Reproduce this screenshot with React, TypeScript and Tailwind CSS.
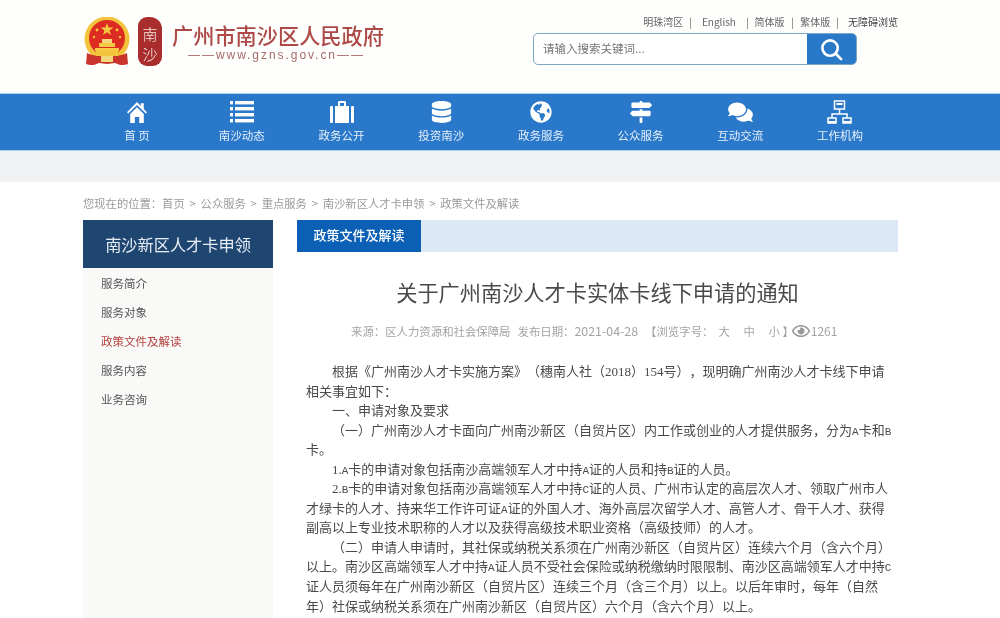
import { FaDatabase, FaGlobeAmericas, FaMapSigns, FaComments, FaRegEye } from "react-icons/fa";

const cjk = '"Noto Sans CJK SC", "Liberation Sans", sans-serif';
const bodyFont = '"Liberation Serif", "Noto Sans CJK SC", serif';

function Home() {
  return (
    <svg viewBox="0 0 20 21" className="w-[20px] h-[21px]" fill="white">
      <path d="M10 0L0 10.2l1.2 1.3L10 3l8.8 8.5 1.2-1.3-3.2-3.2V1.2h-3v2.8z" />
      <path d="M3.2 12L10 5.2 16.8 12v9h-4.6v-6H7.8v6H3.2z" />
    </svg>
  );
}

function Rows() {
  return (
    <svg viewBox="0 0 24 22" className="w-[24px] h-[22px]" fill="white">
      {[0, 6, 12, 18].map((y) => (
        <g key={y}>
          <rect x="0" y={y} width="3" height="3.4" />
          <rect x="5" y={y} width="19" height="3.4" />
        </g>
      ))}
    </svg>
  );
}

function Case() {
  return (
    <svg viewBox="0 0 24 22" className="w-[24px] h-[22px]" fill="white">
      <path d="M8 5V1.5C8 .7 8.7 0 9.5 0h5c.8 0 1.5.7 1.5 1.5V5h-2V2h-4v3z" />
      <rect x="0" y="5" width="3" height="17" rx="1" />
      <rect x="5" y="5" width="14" height="17" />
      <rect x="21" y="5" width="3" height="17" rx="1" />
    </svg>
  );
}

function Sitemap() {
  return (
    <svg viewBox="0 0 25 24" className="w-[25px] h-[24px]" fill="none" stroke="white" strokeWidth="1.5">
      <rect x="7.5" y="1" width="10" height="8" />
      <rect x="9.5" y="3" width="6" height="2" fill="white" stroke="none" />
      <path d="M12.5 9v5M5 18v-4h15v4" />
      <rect x="1" y="18" width="8" height="5" />
      <rect x="16" y="18" width="8" height="5" />
      <rect x="1" y="21" width="8" height="2" fill="white" stroke="none" />
      <rect x="16" y="21" width="8" height="2" fill="white" stroke="none" />
    </svg>
  );
}

const navItems = [
  { label: "首 页", icon: <Home /> },
  { label: "南沙动态", icon: <Rows /> },
  { label: "政务公开", icon: <Case /> },
  { label: "投资南沙", icon: <FaDatabase className="w-[21px] h-[22px]" /> },
  { label: "政务服务", icon: <FaGlobeAmericas className="w-[22px] h-[22px]" /> },
  { label: "公众服务", icon: <FaMapSigns className="w-[22px] h-[22px]" /> },
  { label: "互动交流", icon: <FaComments className="w-[25px] h-[22px]" /> },
  { label: "工作机构", icon: <Sitemap /> },
];

const sideItems = ["服务简介", "服务对象", "政策文件及解读", "服务内容", "业务咨询"];
const crumbs = ["首页", "公众服务", "重点服务", "南沙新区人才卡申领", "政策文件及解读"];

// 原文按行排好，i 表示首行缩进
const lines = [
  { t: "根据《广州南沙人才卡实施方案》（穗南人社（2018）154号），现明确广州南沙人才卡线下申请", i: true },
  { t: "相关事宜如下：" },
  { t: "一、申请对象及要求", i: true },
  { t: "（一）广州南沙人才卡面向广州南沙新区（自贸片区）内工作或创业的人才提供服务，分为A卡和B", i: true },
  { t: "卡。" },
  { t: "1.A卡的申请对象包括南沙高端领军人才中持A证的人员和持B证的人员。", i: true },
  { t: "2.B卡的申请对象包括南沙高端领军人才中持C证的人员、广州市认定的高层次人才、领取广州市人", i: true },
  { t: "才绿卡的人才、持来华工作许可证A证的外国人才、海外高层次留学人才、高管人才、骨干人才、获得" },
  { t: "副高以上专业技术职称的人才以及获得高级技术职业资格（高级技师）的人才。" },
  { t: "（二）申请人申请时，其社保或纳税关系须在广州南沙新区（自贸片区）连续六个月（含六个月）", i: true },
  { t: "以上。南沙区高端领军人才中持A证人员不受社会保险或纳税缴纳时限限制、南沙区高端领军人才中持C" },
  { t: "证人员须每年在广州南沙新区（自贸片区）连续三个月（含三个月）以上。以后年审时，每年（自然" },
  { t: "年）社保或纳税关系须在广州南沙新区（自贸片区）六个月（含六个月）以上。" },
];

// 原图的 A/B/C 是半角宋体，用等宽字体凑半个字宽
function BodyLine({ text }: { text: string }) {
  return (
    <>
      {text.split(/([ABC])/).map((part, i) =>
        /^[ABC]$/.test(part) ? (
          <span key={i} className="font-['Liberation_Mono'] text-[11px] leading-none">{part}</span>
        ) : (
          part
        ),
      )}
    </>
  );
}

function Emblem() {
  return (
    <svg viewBox="0 0 48 50" className="w-[48px] h-[50px]">
      <circle cx="24" cy="22" r="22.5" fill="#f3c33c" />
      <circle cx="24" cy="21" r="18" fill="#dd2c22" />
      <path d="M24 6l1.6 4.6h4.8l-3.9 2.9 1.5 4.6-4-2.9-4 2.9 1.5-4.6-3.9-2.9h4.8z" fill="#f6c945" />
      <circle cx="14" cy="13" r="1.4" fill="#f6c945" />
      <circle cx="34" cy="13" r="1.4" fill="#f6c945" />
      <circle cx="11" cy="20" r="1.2" fill="#f6c945" />
      <circle cx="37" cy="20" r="1.2" fill="#f6c945" />
      <path d="M12 31h24v3H12zM16 26h16v4H16z" fill="#f6c945" />
      <path d="M19 22h10v4H19z" fill="#f3d77a" />
      <path d="M4 36c6 3 12 3 20 3s14 0 20-3l1 11c-5 2-9 1-13-1l-8 1-8-1c-4 2-8 3-13 1z" fill="#c9352c" />
      <path d="M13 34h22v5H13z" fill="#f3c33c" />
      <path d="M18 39h12v6H18z" fill="#f3d77a" />
    </svg>
  );
}

function Seal() {
  return (
    <div className="w-[24px] h-[49px] rounded-[9px] rounded-tr-[12px] bg-[#a92d2d] flex flex-col items-center justify-end pb-[2px] text-[#f7e9e4] text-[15px] leading-[20px] font-light">
      <span>南</span>
      <span>沙</span>
    </div>
  );
}

export default function App() {
  return (
    <div className="w-[1000px] h-[618px] overflow-hidden bg-white [text-spacing-trim:space-all] blur-[0.35px]" style={{ fontFamily: cjk }}>
      {/* 顶部 */}
      <header className="h-[93px] pl-[83px] pr-[102px] flex justify-between bg-[#fefefd]">
        <div className="flex items-start pt-[17px]">
          <Emblem />
          <div className="ml-[7px]"><Seal /></div>
          <div className="ml-[10px] pt-[5px]">
            <div className="text-[21.2px] leading-[26px] text-[#ad4a48] font-medium whitespace-nowrap">广州市南沙区人民政府</div>
            <div className="text-[12px] leading-[15px] text-[#a86a68] tracking-[1.95px] whitespace-nowrap pl-[16px]" style={{ fontFamily: '"Liberation Sans", sans-serif' }}>
              ——www.gzns.gov.cn——
            </div>
          </div>
        </div>
        <div className="w-[365px] flex flex-col items-end pt-[14px]">
          <div className="flex items-center text-[10px] leading-[15px] text-[#666] whitespace-nowrap">
            <span>明珠湾区</span>
            <span className="ml-[6px] mr-[10px]">|</span>
            <span>English</span>
            <span className="ml-[10px] mr-[6px]">|</span>
            <span>简体版</span>
            <span className="mx-[6.5px]">|</span>
            <span>繁体版</span>
            <span className="ml-[6px] mr-[9px]">|</span>
            <span className="text-[#444]">无障碍浏览</span>
          </div>
          <div className="mt-[4px] w-[324px] h-[32px] self-start flex border border-[#7da6c4] rounded-[5px] overflow-hidden bg-white">
            <div className="flex-1 pl-[9px] text-[11.5px] leading-[29px] text-[#777]">请输入搜索关键词...</div>
            <div className="w-[49px] bg-[#2a78c8] flex items-center justify-center">
              <svg viewBox="0 0 24 24" className="w-[23px] h-[23px]" fill="none" stroke="white" strokeWidth="2.8" strokeLinecap="round">
                <circle cx="10.5" cy="10.5" r="8" />
                <path d="M16.5 16.5L22 22" />
              </svg>
            </div>
          </div>
        </div>
      </header>

      {/* 导航 */}
      <nav className="h-[58px] bg-[#2a78c9] border-y border-[#a8d4ee] pl-[87px] grid grid-cols-[105px_repeat(7,99.7px)] text-white">
        {navItems.map((item, i) => (
          <div key={item.label} className={i === 0 ? "flex flex-col items-center pt-[6px] pr-[5px]" : "flex flex-col items-center pt-[6px]"}>
            <div className="h-[24px] flex items-center">{item.icon}</div>
            <div className="mt-[3px] text-[11.5px] leading-[17px] text-[#e6f0fa] whitespace-nowrap">{item.label}</div>
          </div>
        ))}
      </nav>
      <div className="h-[31px] bg-[#f0f1f2]" />

      {/* 面包屑 */}
      <div className="pl-[83px] pt-[13px] h-[38px] text-[11.3px] leading-[16px] text-[#9a9a9a] whitespace-nowrap flex">
        <span>您现在的位置：</span>
        {crumbs.map((c, i) => (
          <span key={c}>
            {i > 0 && <span className="mx-[4.8px]">&gt;</span>}
            {c}
          </span>
        ))}
      </div>

      <div className="pl-[83px] flex items-stretch h-[400px]">
        {/* 左栏 */}
        <aside className="w-[190px] bg-[#f9f9f8]">
          <div className="h-[48px] bg-[#1f4571] text-[#e8eef5] text-[16.2px] leading-[48px] text-center">南沙新区人才卡申领</div>
          <ul className="pl-[18px] pt-[1px] text-[11.5px] leading-[29px] text-[#555]">
            {sideItems.map((s) => (
              <li key={s} className={s === "政策文件及解读" ? "text-[#b5413f]" : ""}>{s}</li>
            ))}
          </ul>
        </aside>

        {/* 正文 */}
        <main className="w-[601px] ml-[24px]">
          <div className="h-[32px] bg-[#dce8f5]">
            <div className="w-[124px] h-[32px] bg-[#0b5fb4] text-white text-[13px] font-medium leading-[30px] text-center">政策文件及解读</div>
          </div>
          <h1 className="mt-[24px] text-[21.2px] leading-[32px] text-[#4a4a4a] text-center whitespace-nowrap">关于广州南沙人才卡实体卡线下申请的通知</h1>
          <div className="mt-[14px] pl-[54px] flex items-center text-[11.4px] leading-[16px] text-[#a3a3a3] whitespace-nowrap">
            <span>来源：区人力资源和社会保障局</span>
            <span className="ml-[7px]">发布日期：<span className="text-[12.4px]">2021-04-28</span></span>
            <span className="ml-[7px]">【浏览字号：</span>
            <span className="ml-[5px]">大</span>
            <span className="ml-[13.6px]">中</span>
            <span className="ml-[13.6px]">小</span>
            <span>&nbsp;】</span>
            <FaRegEye className="ml-[-2px] w-[18px] h-[18px] text-[#999]" />
            <span className="ml-[1px] text-[12px]">1261</span>
          </div>
          <div className="mt-[22px] pl-[9px] text-[13px] leading-[19.55px] text-[#4a4a4a]" style={{ fontFamily: bodyFont }}>
            {lines.map((l) => (
              <div key={l.t} className={l.i ? "h-[19.55px] pl-[26px] whitespace-nowrap" : "h-[19.55px] whitespace-nowrap"}>
                <BodyLine text={l.t} />
              </div>
            ))}
          </div>
        </main>
      </div>
    </div>
  );
}
